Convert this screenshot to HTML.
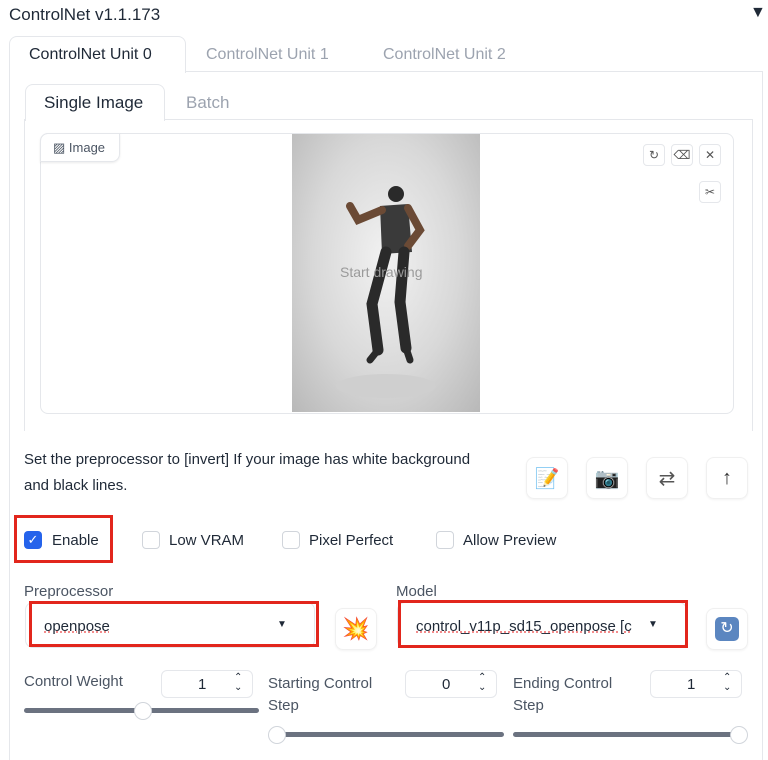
<!DOCTYPE html>
<html><head><style>
*{box-sizing:border-box;margin:0;padding:0}
html,body{width:768px;height:760px;overflow:hidden}
body{background:#fff;font-family:"Liberation Sans",sans-serif;position:relative;color:#1f2937}
.a{position:absolute}
.t{font-size:15px}
.gray{color:#9ca3af}
.btn{position:absolute;width:42px;height:42px;border:1px solid #f0f0f0;border-radius:8px;box-shadow:0 1px 2px rgba(0,0,0,.05);display:flex;align-items:center;justify-content:center;font-size:20px}
.cb{position:absolute;width:18px;height:18px;border:1px solid #d1d5db;border-radius:4px;background:#fff}
.red{position:absolute;border:3px solid #e2261c}
.num{position:absolute;height:28px;width:92px;border:1px solid #e5e7eb;border-radius:6px;font-size:15px}
.track{position:absolute;height:5px;background:#6b7280;border-radius:3px}
.thumb{position:absolute;width:18px;height:18px;border:1px solid #d1d5db;border-radius:50%;background:#fff}
.sm{position:absolute;width:22px;height:22px;border:1px solid #e5e7eb;border-radius:4px;font-size:12px;color:#555;display:flex;align-items:center;justify-content:center}
</style></head><body>
<div class="a" style="left:9px;top:5px;font-size:17px">ControlNet v1.1.173</div>
<div class="a" style="left:750px;top:4px;font-size:16px">▼</div>
<div class="a" style="left:9px;top:71px;width:754px;height:720px;border:1px solid #e5e7eb"></div>
<div class="a" style="left:9px;top:36px;width:177px;height:37px;border:1px solid #e5e7eb;border-bottom:none;border-radius:8px 8px 0 0;background:#fff"></div>
<div class="a t" style="left:29px;top:46px;font-size:16px">ControlNet Unit 0</div>
<div class="a t gray" style="left:206px;top:46px;font-size:16px">ControlNet Unit 1</div>
<div class="a t gray" style="left:383px;top:46px;font-size:16px">ControlNet Unit 2</div>
<div class="a" style="left:24px;top:119px;width:729px;height:312px;border:1px solid #e5e7eb;border-bottom:none"></div>
<div class="a" style="left:25px;top:84px;width:140px;height:37px;border:1px solid #e5e7eb;border-bottom:none;border-radius:8px 8px 0 0;background:#fff"></div>
<div class="a" style="left:44px;top:93px;font-size:17px">Single Image</div>
<div class="a gray" style="left:186px;top:93px;font-size:17px">Batch</div>
<div class="a" style="left:40px;top:133px;width:694px;height:281px;border:1px solid #e5e7eb;border-radius:8px"></div>
<div class="a" style="left:40px;top:133px;width:80px;height:29px;border:1px solid #e5e7eb;border-radius:8px 0 8px 0;box-shadow:0 1px 2px rgba(0,0,0,.08);font-size:13px;color:#4b5563;padding:6px 0 0 12px">▨ Image</div>
<div class="a" style="left:292px;top:134px;width:188px;height:278px;background:radial-gradient(ellipse at 50% 45%,#f2f2f2 0%,#d8d8d8 55%,#b8b8b8 100%)">
<svg width="188" height="278" viewBox="0 0 188 278">
<ellipse cx="94" cy="252" rx="50" ry="12" fill="#cfcfcf"/>
<g fill="#2a2a2a" stroke="#2a2a2a" stroke-linecap="round">
<circle cx="104" cy="60" r="8" stroke="none"/>
<path d="M88 72 L116 70 L120 118 L90 120 Z" stroke="none" fill="#3a3a3a"/>
<path d="M90 76 L66 86 L58 72" stroke-width="8" fill="none" stroke="#6b4a35"/>
<path d="M116 74 L128 96 L116 112" stroke-width="8" fill="none" stroke="#6b4a35"/>
<path d="M94 118 L80 170 L86 216" stroke-width="11" fill="none"/>
<path d="M112 118 L108 168 L114 214" stroke-width="11" fill="none"/>
<path d="M86 216 L78 226" stroke-width="7"/>
<path d="M114 214 L118 226" stroke-width="7"/>
</g>
<text x="48" y="143" font-size="14" fill="#9a9a9a" font-family="Liberation Sans">Start drawing</text>
</svg></div>
<div class="sm" style="left:643px;top:144px">↻</div>
<div class="sm" style="left:671px;top:144px">⌫</div>
<div class="sm" style="left:699px;top:144px">✕</div>
<div class="sm" style="left:699px;top:181px">✂</div>
<div class="a" style="left:24px;top:447px;font-size:15px;line-height:26px;width:468px">Set the preprocessor to [invert] If your image has white background and black lines.</div>
<div class="btn" style="left:526px;top:457px">📝</div>
<div class="btn" style="left:586px;top:457px">📷</div>
<div class="btn" style="left:646px;top:457px;color:#555">⇄</div>
<div class="btn" style="left:706px;top:457px;color:#333;font-weight:bold">↑</div>
<div class="red" style="left:14px;top:515px;width:99px;height:48px"></div>
<div class="a" style="left:24px;top:531px;width:18px;height:18px;background:#2563eb;border-radius:4px;color:#fff;font-size:13px;text-align:center;line-height:18px">✓</div>
<div class="a t" style="left:52px;top:532px">Enable</div>
<div class="cb" style="left:142px;top:531px"></div><div class="a t" style="left:169px;top:532px">Low VRAM</div>
<div class="cb" style="left:282px;top:531px"></div><div class="a t" style="left:309px;top:532px">Pixel Perfect</div>
<div class="cb" style="left:436px;top:531px"></div><div class="a t" style="left:463px;top:532px">Allow Preview</div>
<div class="a t" style="left:24px;top:583px;color:#4b5563">Preprocessor</div>
<div class="a t" style="left:396px;top:583px;color:#4b5563">Model</div>
<div class="a" style="left:25px;top:602px;width:290px;height:46px;border:1px solid #e5e7eb;border-radius:8px"></div>
<div class="red" style="left:29px;top:601px;width:290px;height:46px"></div>
<div class="a t" style="left:44px;top:618px;text-decoration:underline dotted #e66">openpose</div>
<div class="a" style="left:277px;top:619px;font-size:10px">▼</div>
<div class="btn" style="left:335px;top:608px;font-size:22px">💥</div>
<div class="a" style="left:397px;top:602px;width:290px;height:46px;border:1px solid #e5e7eb;border-radius:8px"></div>
<div class="red" style="left:398px;top:600px;width:290px;height:48px"></div>
<div class="a t" style="left:416px;top:618px;width:222px;overflow:hidden;white-space:nowrap;text-decoration:underline dotted #e66">control_v11p_sd15_openpose [c</div>
<div class="a" style="left:648px;top:619px;font-size:10px">▼</div>
<div class="btn" style="left:706px;top:608px"><div style="width:24px;height:24px;background:#5b86c0;border-radius:5px;color:#fff;font-size:16px;text-align:center;line-height:24px">↻</div></div>
<div class="a t" style="left:24px;top:673px;color:#4b5563">Control Weight</div>
<div class="num" style="left:161px;top:670px"><span style="position:absolute;left:36px;top:5px">1</span><span style="position:absolute;left:72px;top:2px;font-size:10px;line-height:10px">⌃<br>⌄</span></div>
<div class="track" style="left:24px;top:708px;width:235px"></div>
<div class="thumb" style="left:134px;top:702px"></div>
<div class="a t" style="left:268px;top:673px;line-height:22px;color:#4b5563">Starting Control<br>Step</div>
<div class="num" style="left:405px;top:670px"><span style="position:absolute;left:36px;top:5px">0</span><span style="position:absolute;left:72px;top:2px;font-size:10px;line-height:10px">⌃<br>⌄</span></div>
<div class="track" style="left:270px;top:732px;width:234px"></div>
<div class="thumb" style="left:268px;top:726px"></div>
<div class="a t" style="left:513px;top:673px;line-height:22px;color:#4b5563">Ending Control<br>Step</div>
<div class="num" style="left:650px;top:670px"><span style="position:absolute;left:36px;top:5px">1</span><span style="position:absolute;left:72px;top:2px;font-size:10px;line-height:10px">⌃<br>⌄</span></div>
<div class="track" style="left:513px;top:732px;width:234px"></div>
<div class="thumb" style="left:730px;top:726px"></div>
</body></html>
